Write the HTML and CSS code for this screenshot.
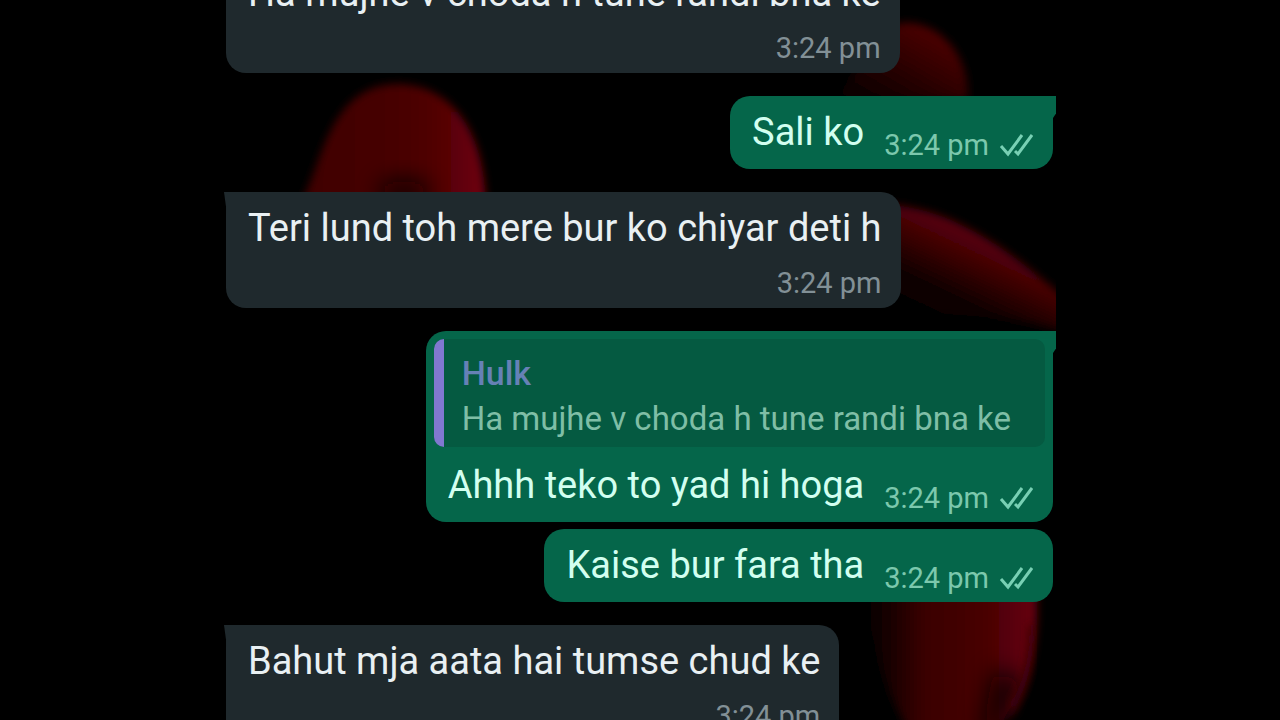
FILE: index.html
```html
<!DOCTYPE html>
<html lang="hi-Latn">
<head>
<meta charset="utf-8">
<meta name="viewport" content="width=device-width, initial-scale=1">
<title>Chat</title>
<link rel="stylesheet" href="styles.css">
</head>
<body>
<main class="chat">
  <svg class="wallpaper" viewBox="0 0 832 720" preserveAspectRatio="xMidYMid slice" aria-hidden="true">
    <defs>
      <filter id="soft" x="-20%" y="-20%" width="140%" height="140%"><feGaussianBlur stdDeviation="4"/></filter>
      <filter id="softer" x="-80%" y="-80%" width="260%" height="260%"><feGaussianBlur stdDeviation="12"/></filter>
      <linearGradient id="petalA" x1="0" y1="0" x2="1" y2="0">
        <stop offset="0" stop-color="#400004"/><stop offset=".5" stop-color="#460002"/><stop offset=".75" stop-color="#520004"/><stop offset="1" stop-color="#70000f"/>
      </linearGradient>
      <linearGradient id="petalB" gradientUnits="userSpaceOnUse" x1="700" y1="320" x2="750" y2="215">
        <stop offset="0" stop-color="#000"/><stop offset=".3" stop-color="#100001"/><stop offset=".7" stop-color="#480006"/><stop offset="1" stop-color="#66000f"/>
      </linearGradient>
      <linearGradient id="petalC" x1="0" y1="0" x2="1" y2="0">
        <stop offset="0" stop-color="#000"/><stop offset=".35" stop-color="#3a0003"/><stop offset=".7" stop-color="#480003"/><stop offset="1" stop-color="#680010"/>
      </linearGradient>
      <linearGradient id="petalD" x1="0" y1="1" x2="1" y2="0">
        <stop offset="0" stop-color="#000"/><stop offset=".4" stop-color="#240001"/><stop offset=".8" stop-color="#4a0003"/><stop offset="1" stop-color="#520006"/>
      </linearGradient>
    </defs>
    <path filter="url(#soft)" fill="url(#petalA)" d="M76 205C98 168 103 86 172 84C224 84 260 125 262 205Z"/>
    <ellipse filter="url(#softer)" cx="180" cy="192" rx="26" ry="12" fill="#100000"/>
    <path filter="url(#soft)" fill="url(#petalD)" d="M610 100L640 60L672 24C704 16 746 45 744 100Z"/>
    <path filter="url(#soft)" fill="url(#petalB)" d="M650 204C720 204 775 240 850 306L850 336C800 316 720 312 660 315Z"/>
    <path filter="url(#soft)" fill="url(#petalC)" d="M640 590H812C816 625 808 680 790 714C780 722 770 728 762 740H690C665 700 648 650 640 590Z"/>
    <path filter="url(#softer)" fill="#090001" d="M770 668L800 684L770 740H756Z"/>
    <path filter="url(#soft)" fill="none" stroke="#400009" stroke-width="7" d="M808 625C808 660 800 690 786 708"/>
  </svg>

  <section class="messages" aria-label="Messages">
    <article class="bubble in">
      <p class="text">Ha mujhe v choda h tune randi bna ke</p>
      <div class="meta"><time datetime="15:24">3:24 pm</time></div>
    </article>

    <article class="bubble out first">
      <p class="text">Sali ko</p>
      <div class="meta"><time datetime="15:24">3:24 pm</time><svg class="ticks" viewBox="0 0 34 26" role="img" aria-label="Delivered"><path d="M2 14L9 22L23 3M16 19L19 22L33 3"/></svg></div>
    </article>

    <article class="bubble in first">
      <p class="text">Teri lund toh mere bur ko chiyar deti h</p>
      <div class="meta"><time datetime="15:24">3:24 pm</time></div>
    </article>

    <article class="bubble out first reply">
      <blockquote class="quote">
        <cite class="author">Hulk</cite>
        <p class="quoted">Ha mujhe v choda h tune randi bna ke</p>
      </blockquote>
      <p class="text">Ahhh teko to yad hi hoga</p>
      <div class="meta"><time datetime="15:24">3:24 pm</time><svg class="ticks" viewBox="0 0 34 26" role="img" aria-label="Delivered"><path d="M2 14L9 22L23 3M16 19L19 22L33 3"/></svg></div>
    </article>

    <article class="bubble out">
      <p class="text">Kaise bur fara tha</p>
      <div class="meta"><time datetime="15:24">3:24 pm</time><svg class="ticks" viewBox="0 0 34 26" role="img" aria-label="Delivered"><path d="M2 14L9 22L23 3M16 19L19 22L33 3"/></svg></div>
    </article>

    <article class="bubble in first">
      <p class="text">Bahut mja aata hai tumse chud ke</p>
      <div class="meta"><time datetime="15:24">3:24 pm</time></div>
    </article>
  </section>
</main>
</body>
</html>
```
FILE: styles.css
```css
* { box-sizing: border-box; }

body {
  margin: 0;
  background: #000;
  font-family: Roboto, "Noto Sans", sans-serif;
}

.chat {
  position: relative;
  width: 65%;
  height: 100vh;
  margin: 0 auto;
  overflow: hidden;
}

.wallpaper {
  position: absolute;
  inset: 0;
  width: 100%;
  height: 100%;
}

.messages {
  position: relative;
  display: flex;
  flex-direction: column;
  margin-top: -43px;
  padding: 0 3px 0 2px;
}

.bubble {
  position: relative;
  border-radius: 20px;
}

.first { margin-top: 23px; }

.in {
  display: flex;
  flex-direction: column;
  align-self: flex-start;
  padding: 12px 19px 7px 22px;
  background: #1f292d;
  color: #e9f0f3;
}

.out {
  display: grid;
  grid-template-columns: 1fr auto;
  align-self: flex-end;
  align-items: end;
  column-gap: 20px;
  padding: 12px 20px 6px 22px;
  background: #05664a;
  color: #d2fff0;
}

.out + .out:not(.first) { margin-top: 7px; }

.in.first { border-top-left-radius: 0; }
.out.first { border-top-right-radius: 0; }

/* Small tail beside the first bubble of a group */
.first::before {
  content: "";
  position: absolute;
  top: 0;
  width: 3px;
  height: 22px;
  background: inherit;
}

.in.first::before { left: -2px; clip-path: polygon(0 0, 100% 0, 100% 100%); }
.out.first::before { right: -3px; clip-path: polygon(0 0, 100% 0, 100% 80%, 0 100%); }

.text {
  margin: 0;
  font-size: 38px;
  line-height: 48px;
  white-space: nowrap;
}

.out .text { padding-bottom: 7px; }

.meta {
  display: flex;
  align-items: center;
  gap: 10px;
  font-size: 29px;
  line-height: 36px;
  white-space: nowrap;
  color: #829096;
}

.in .meta { align-self: flex-end; padding-top: 13px; }
.out .meta { color: #7cc8ad; }

.ticks {
  width: 34px;
  height: 26px;
  fill: none;
  stroke: #78d0b4;
  stroke-width: 3;
}

.reply { padding-top: 8px; }

.quote {
  position: relative;
  grid-column: 1 / -1;
  margin: 0 -12px 14px -14px;
  padding: 11px 27px 5px 28px;
  overflow: hidden;
  border-radius: 10px;
  background: #055a41;
}

.quote::before {
  content: "";
  position: absolute;
  inset: 0 auto 0 0;
  width: 10px;
  background: #8078d0;
}

.author {
  display: block;
  font-size: 34px;
  font-style: normal;
  font-weight: 500;
  line-height: 46px;
  color: #6681b5;
}

.quoted {
  margin: 0;
  font-size: 33px;
  line-height: 46px;
  white-space: nowrap;
  color: #7fbea6;
}
```
